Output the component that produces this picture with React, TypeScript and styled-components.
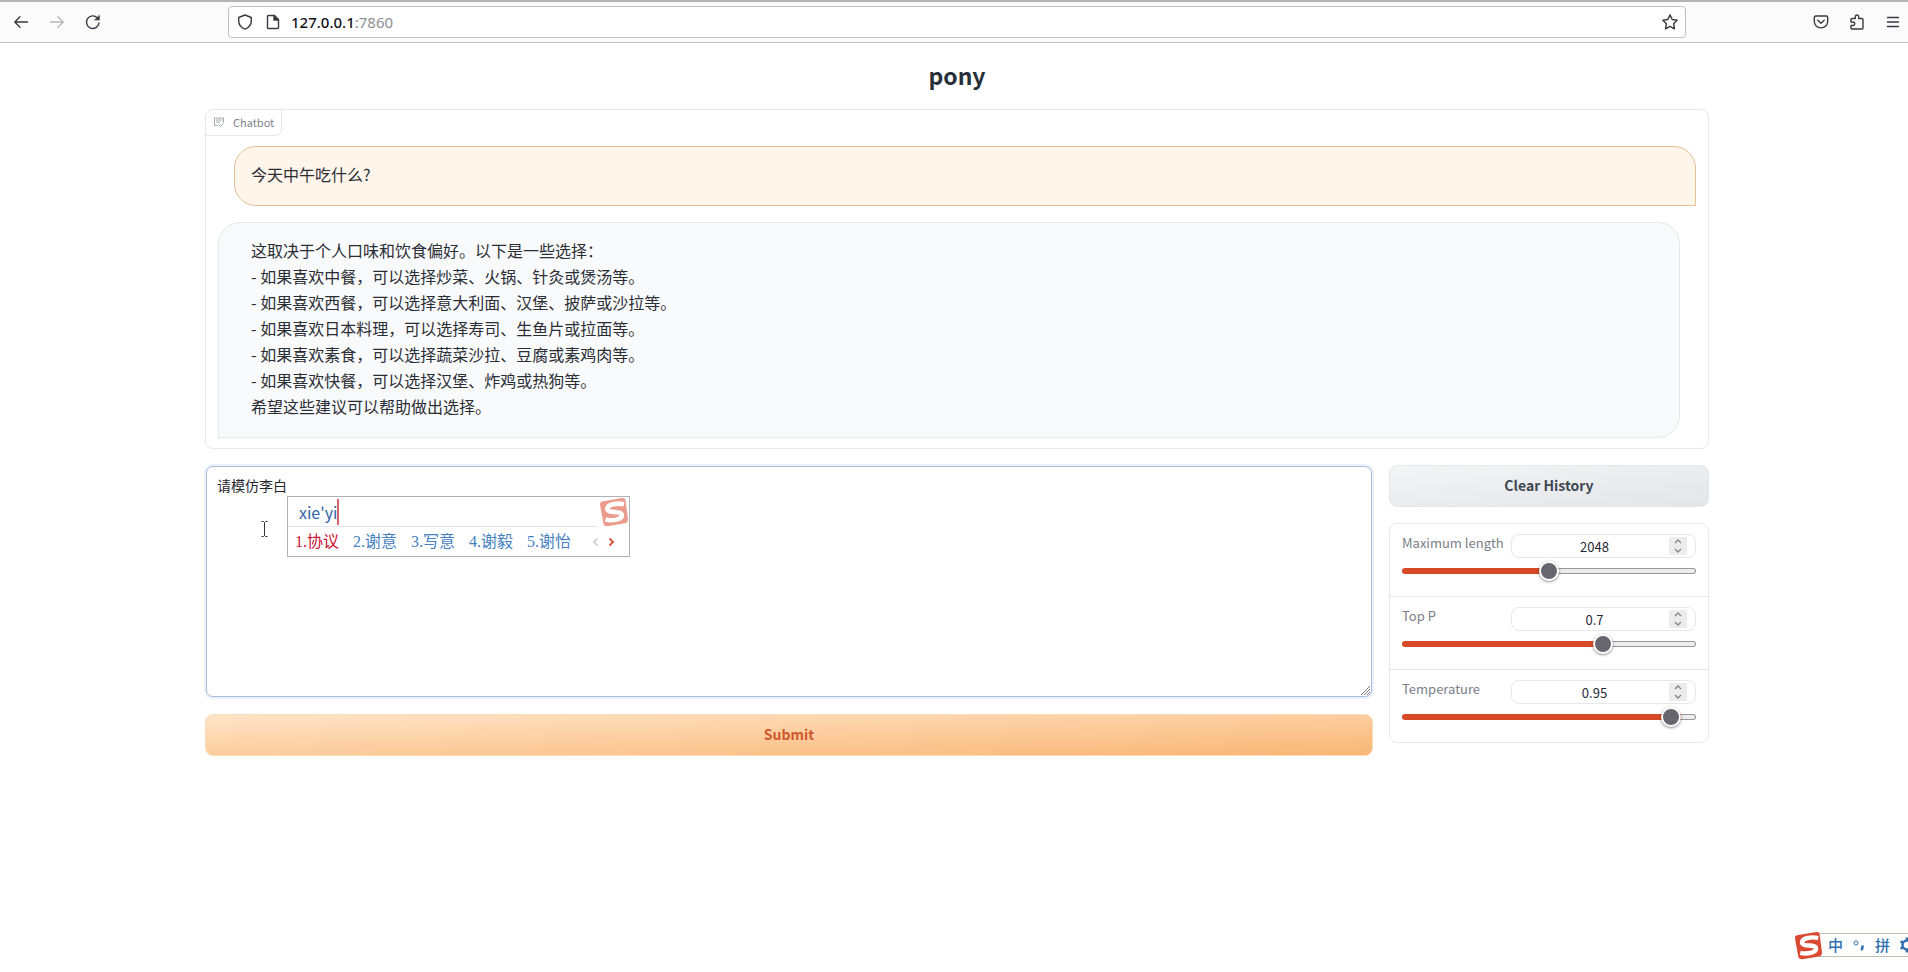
import React, { useState } from 'react';
import styled, { createGlobalStyle } from 'styled-components';

const sans = '"Noto Sans CJK SC", "Noto Sans", sans-serif';

const GlobalStyle = createGlobalStyle`
  *, *::before, *::after { box-sizing: border-box; }
  body { margin: 0; background: #fff; color: #272f3a; font-family: ${sans}; overflow-x: hidden; }
  button, input, textarea { font-family: inherit; }
`;

const Toolbar = styled.header`
  display: grid;
  grid-template-columns: 228px minmax(0, 1fr) 222px;
  align-items: center;
  height: 43px;
  background: #fbfbfb;
  border-top: 2px solid #b4b4b3;
  border-bottom: 1px solid #c3c3c5;
`;

const ToolGroup = styled.nav<{ $end?: boolean }>`
  display: flex;
  gap: 16px;
  padding: ${p => (p.$end ? '0 5px 0 0' : '0 0 0 11px')};
  justify-content: ${p => (p.$end ? 'flex-end' : 'flex-start')};
`;

const IconButton = styled.button<{ $faded?: boolean }>`
  display: grid;
  place-items: center;
  width: 20px;
  height: 20px;
  padding: 0;
  border: 0;
  background: none;
  color: ${p => (p.$faded ? '#b9b9bb' : '#3a3a40')};
`;

const AddressBar = styled.div`
  display: flex;
  align-items: center;
  gap: 8px;
  height: 32px;
  padding: 0 5px 0 6px;
  background: #fff;
  border: 1px solid #c0c0c2;
  border-radius: 4px;
  color: #1c1b22;
`;

const Address = styled.p`
  flex: 1;
  margin: 0;
  font: 15px/20px "Noto Sans", sans-serif;
  color: #8d8d92;
  b { font-weight: 500; color: #15141a; }
`;

const Page = styled.main`
  padding: 16px 16px 16px 22px;
`;

const Content = styled.div`
  display: flex;
  flex-direction: column;
  gap: 16px;
  max-width: 1504px;
  margin: 0 auto;
`;

const Title = styled.h1`
  margin: 0;
  padding-bottom: 2px;
  font-size: 23px;
  line-height: 32px;
  font-weight: 600;
  text-align: center;
`;

const ChatPanel = styled.section`
  border: 1px solid #e5e7eb;
  border-radius: 8px;
`;

const ChatLabel = styled.h2`
  display: inline-flex;
  align-items: center;
  gap: 8px;
  height: 26px;
  margin: 0;
  padding: 0 7px 2px;
  border: solid #e5e7eb;
  border-width: 0 1px 1px 0;
  border-radius: 7px 0 7px 0;
  font-size: 11px;
  font-weight: 400;
  color: #7d828b;
  vertical-align: top;
`;

const Messages = styled.div`
  display: flex;
  flex-direction: column;
  gap: 16px;
  padding: 10px 12px;
`;

const Bubble = styled.div<{ $user?: boolean }>`
  padding: 14px 16px 18px ${p => (p.$user ? 16 : 32)}px;
  margin: ${p => (p.$user ? '0 0 0 16px' : '0 16px 0 0')};
  border: 1px solid ${p => (p.$user ? '#dfbf93' : '#e5e7eb')};
  border-radius: ${p => (p.$user ? '22px 22px 0 22px' : '22px 22px 22px 0')};
  background: ${p => (p.$user ? '#fff5eb' : '#f9fafc')};
  color: #2b2d35;
  font-size: 16px;
  line-height: 26px;
  white-space: pre-line;
`;

const Columns = styled.div`
  display: grid;
  grid-template-columns: minmax(0, 1fr) 320px;
  gap: 16px;
  align-items: start;
`;

const Stack = styled.div`
  display: flex;
  flex-direction: column;
  gap: 16px;
`;

const Prompt = styled.div`
  position: relative;
  display: flex;
  height: 233px;
`;

const PromptInput = styled.textarea`
  flex: 1;
  margin: 1px;
  padding: 7px 10px;
  border: 1px solid #a9bddc;
  border-radius: 7px;
  outline: 0;
  box-shadow: 0 0 0 2px #e9f1fb;
  font-size: 14px;
  line-height: 22px;
  color: #25262c;
  resize: none;
`;

const Grip = styled.svg`
  position: absolute;
  right: 2px;
  bottom: 2px;
`;

const Pointer = styled.svg`
  position: absolute;
  left: 55px;
  top: 55px;
`;

const Ime = styled.div`
  position: absolute;
  left: 82px;
  top: 31px;
  width: 343px;
  height: 61px;
  background: #fff;
  border: 1px solid #b2b2b6;
`;

const Composition = styled.div`
  display: flex;
  align-items: center;
  height: 30px;
  margin-right: 32px;
  padding-left: 11px;
  border-bottom: 1px solid #e4e4e4;
  font-size: 16px;
  line-height: 26px;
  color: #3566a5;
  span { border-right: 2px solid #d4626b; }
`;

const Candidates = styled.ol`
  display: flex;
  align-items: center;
  height: 29px;
  margin: 0;
  padding: 0 0 0 7px;
  list-style: none;
  font: 16px/24px "Liberation Serif", "Noto Sans CJK SC", serif;
`;

const Candidate = styled.li<{ $first?: boolean }>`
  width: 58px;
  white-space: nowrap;
  color: ${p => (p.$first ? '#cb1236' : '#4580bf')};
`;

const CornerLogo = styled.div`
  position: absolute;
  top: 0;
  right: 0;
  display: flex;
  opacity: 0.55;
`;

const ActionButton = styled.button<{ $primary?: boolean }>`
  height: 42px;
  padding: 0 0 2px;
  border: 1px solid ${p => (p.$primary ? '#fbdcb8' : '#e5e7eb')};
  border-radius: 8px;
  background: ${p => (p.$primary
    ? 'linear-gradient(to bottom right, #ffe4c8, #f9b674)'
    : 'linear-gradient(to bottom right, #f3f4f6, #e3e5e8)')};
  color: ${p => (p.$primary ? '#d0582c' : '#404854')};
  font-size: 14px;
  font-weight: 600;
`;

const Settings = styled.section`
  border: 1px solid #e5e7eb;
  border-radius: 8px;
`;

const Setting = styled.div`
  padding: 10px 12px 15px;
  & + & { border-top: 1px solid #e5e7eb; }
`;

const SettingHead = styled.div`
  display: flex;
  justify-content: space-between;
  align-items: flex-start;
`;

const SettingLabel = styled.label`
  font-size: 13px;
  line-height: 18px;
  color: #7b8089;
`;

const NumberBox = styled.div`
  display: flex;
  align-items: center;
  width: 185px;
  height: 24px;
  padding-right: 8px;
  border: 1px solid #e5e7eb;
  border-radius: 8px;
`;

const NumberInput = styled.input`
  flex: 1;
  min-width: 0;
  height: 20px;
  padding: 0 0 0 8px;
  border: 0;
  outline: 0;
  background: none;
  font-size: 13px;
  color: #1f2937;
  text-align: center;
  appearance: textfield;
  &::-webkit-inner-spin-button { appearance: none; margin: 0; }
`;

const Spinner = styled.div`
  display: grid;
  width: 18px;
  height: 18px;
  background: #ececed;
`;

const Step = styled.button`
  display: grid;
  place-items: center;
  height: 9px;
  padding: 0;
  border: 0;
  background: none;
  color: #85858a;
`;

const Range = styled.input`
  display: block;
  width: 100%;
  height: 20px;
  margin: 3px 0 0;
  background: none;
  appearance: none;
  &::-webkit-slider-runnable-track {
    height: 6px;
    border: 1px solid transparent;
    border-radius: 3px;
    background:
      linear-gradient(#d64a27, #d64a27) 0 0 / var(--fill) 100% no-repeat border-box,
      linear-gradient(#ededef, #ededef) padding-box,
      linear-gradient(#97979c, #97979c) border-box;
  }
  &::-webkit-slider-thumb {
    appearance: none;
    width: 20px;
    height: 20px;
    margin-top: -8px;
    border: 2px solid #fff;
    border-radius: 50%;
    background: #67666e;
    box-shadow: 0 1px 3px rgba(0, 0, 0, 0.45);
  }
`;

const ImeStatus = styled.aside`
  position: fixed;
  right: 0;
  bottom: 12px;
  display: flex;
  align-items: center;
  overflow: hidden;
  height: 30px;
  width: 114px;
  > svg { flex: none; z-index: 1; }
`;

const StatusBar = styled.div`
  display: flex;
  align-items: center;
  gap: 9px;
  flex: 1;
  min-width: 0;
  height: 24px;
  margin-left: -4px;
  padding-left: 9px;
  border: solid #bfc0b5;
  border-width: 1px 0;
  background: #fff;
  color: #2f70b0;
  font-size: 15px;
  line-height: 20px;
  font-weight: 500;
  svg { flex: none; }
`;

const Icon = ({ children, size = 16 }: { children: React.ReactNode; size?: number }) => (
  <svg width={size} height={size} viewBox="0 0 16 16" fill="none" stroke="currentColor" strokeWidth="1.4" strokeLinecap="round" strokeLinejoin="round" aria-hidden="true">
    {children}
  </svg>
);

const ImeLogo = ({ size }: { size: number }) => (
  <svg width={size} height={size} viewBox="0 0 30 30" aria-hidden="true">
    <path d="M3 4.500 Q.8 5 1 7.500 L4.500 27 Q5.500 29.700 8.500 29.200 L26 26.300 Q29 25.500 29 22.500 L26.500 3 Q26 .5 23 1 Z" fill="#d94a30" />
    <path d="M25 7.300 C18 5.500 8.500 7.500 8.300 11.800 C8.200 16.800 22.500 13.300 22.800 18 C23 22.800 13 24 6.500 22.600" fill="none" stroke="#fff" strokeWidth="4.600" />
  </svg>
);

const reply = `这取决于个人口味和饮食偏好。以下是一些选择：
- 如果喜欢中餐，可以选择炒菜、火锅、针灸或煲汤等。
- 如果喜欢西餐，可以选择意大利面、汉堡、披萨或沙拉等。
- 如果喜欢日本料理，可以选择寿司、生鱼片或拉面等。
- 如果喜欢素食，可以选择蔬菜沙拉、豆腐或素鸡肉等。
- 如果喜欢快餐，可以选择汉堡、炸鸡或热狗等。
希望这些建议可以帮助做出选择。`;

type SliderProps = { id: string; label: string; max: number; step: number; initial: number };

function SliderSetting({ id, label, max, step, initial }: SliderProps) {
  const [value, setValue] = useState(initial);
  const change = (next: number) => setValue(Math.min(max, Math.max(0, Number(next.toFixed(2)))));
  const fill = { '--fill': `${(value / max) * 100}%` } as React.CSSProperties;
  return (
    <Setting>
      <SettingHead>
        <SettingLabel htmlFor={id}>{label}</SettingLabel>
        <NumberBox>
          <NumberInput id={id} type="number" max={max} step={step} value={value} onChange={e => change(Number(e.target.value))} />
          <Spinner>
            <Step aria-label={`Increase ${label}`} onClick={() => change(value + step)}>
              <svg width="8" height="5" viewBox="0 0 8 5" fill="none" stroke="currentColor" strokeWidth="1.3"><path d="M1 4 4 1 7 4" /></svg>
            </Step>
            <Step aria-label={`Decrease ${label}`} onClick={() => change(value - step)}>
              <svg width="8" height="5" viewBox="0 0 8 5" fill="none" stroke="currentColor" strokeWidth="1.3"><path d="M1 1 4 4 7 1" /></svg>
            </Step>
          </Spinner>
        </NumberBox>
      </SettingHead>
      <Range type="range" aria-label={label} min={0} max={max} step={step} value={value} style={fill} onChange={e => change(Number(e.target.value))} />
    </Setting>
  );
}

export default function App() {
  const [prompt, setPrompt] = useState('请模仿李白');
  return (
    <>
      <GlobalStyle />
      <Toolbar>
        <ToolGroup aria-label="Navigation">
          <IconButton aria-label="Back"><Icon><path d="M14.500 8H1.800M7 2.800 1.800 8 7 13.200" /></Icon></IconButton>
          <IconButton aria-label="Forward" $faded><Icon><path d="M1.500 8H14.200M9 2.800 14.200 8 9 13.200" /></Icon></IconButton>
          <IconButton aria-label="Reload"><Icon><path d="M14 9A6.300 6.300 0 1 1 12.300 3.800" /><path d="M14.400 1.500V6H9.800Z" fill="currentColor" strokeWidth="0.600" /></Icon></IconButton>
        </ToolGroup>
        <AddressBar>
          <IconButton aria-label="Site protection"><Icon><path d="M8 1 14.300 3.500V7C14.300 11 11.500 13.800 8 15.200 4.500 13.800 1.700 11 1.700 7V3.500Z" /></Icon></IconButton>
          <IconButton aria-label="Site information"><Icon><path d="M3.500 1.500H9.500L13.500 5.500V13.500Q13.500 14.500 12.500 14.500H3.500Q2.500 14.500 2.500 13.500V2.500Q2.500 1.500 3.500 1.500Z" /><path d="M9 1.500 13.500 6H9Z" fill="currentColor" /></Icon></IconButton>
          <Address><b>127.0.0.1</b>:7860</Address>
          <IconButton aria-label="Bookmark"><Icon><path d="M8 .9 10.200 5.500 15.200 6.200 11.600 9.700 12.500 14.800 8 12.400 3.500 14.800 4.400 9.700 .8 6.200 5.800 5.500Z" /></Icon></IconButton>
        </AddressBar>
        <ToolGroup $end aria-label="Browser tools">
          <IconButton aria-label="Save to Pocket"><Icon><path d="M2.800 2H13.200Q14.700 2 14.700 3.500V7.200C14.700 11 11.800 13.900 8 13.900S1.300 11 1.300 7.200V3.500Q1.300 2 2.800 2ZM4.800 6.300 8 9.300 11.200 6.300" /></Icon></IconButton>
          <IconButton aria-label="Extensions"><Icon><path d="M2 7V5.500Q2 4.500 3 4.500H6.300V2.800Q6.300 1 8 1T9.700 2.800V4.500H13Q14 4.500 14 5.500V14Q14 15 13 15H3Q2 15 2 14V11.500H4Q5.800 11.500 5.800 9.800T4 8H2Z" /></Icon></IconButton>
          <IconButton aria-label="Menu"><Icon><path d="M2.500 3.500H13.500M2.500 8H13.500M2.500 12.500H13.500" /></Icon></IconButton>
        </ToolGroup>
      </Toolbar>
      <Page>
        <Content>
          <Title>pony</Title>
          <ChatPanel>
            <ChatLabel>
              <svg width="12" height="12" viewBox="0 0 12 12" fill="none" stroke="#a3a6ad" aria-hidden="true"><path d="M4.500 9.500H1.500V2H10.500V6.500M3 4H9M3 6H7M5.500 8.500 7.500 10.500 10.500 7.500" /></svg>
              Chatbot
            </ChatLabel>
            <Messages>
              <Bubble $user>今天中午吃什么?</Bubble>
              <Bubble>{reply}</Bubble>
            </Messages>
          </ChatPanel>
          <Columns>
            <Stack>
              <Prompt>
                <PromptInput aria-label="Message" value={prompt} onChange={e => setPrompt(e.target.value)} />
                <Grip width="11" height="11" viewBox="0 0 11 11" stroke="#77777c" aria-hidden="true"><path d="M1 10 10 1M4 10 10 4M7 10 10 7" /></Grip>
                <Pointer width="9" height="18" viewBox="0 0 9 18" stroke="#333" fill="none" aria-hidden="true"><path d="M1.500 1.500H3.500L4.500 2.500 5.500 1.500H7.500M4.500 2.500V15.500M1.500 16.500H3.500L4.500 15.500 5.500 16.500H7.500" /></Pointer>
                <Ime>
                  <Composition><span>xie'yi</span></Composition>
                  <Candidates>
                    <Candidate $first>1.协议</Candidate>
                    <Candidate>2.谢意</Candidate>
                    <Candidate>3.写意</Candidate>
                    <Candidate>4.谢毅</Candidate>
                    <Candidate>5.谢怡</Candidate>
                    <li>
                      <svg width="32" height="10" viewBox="0 0 32 10" fill="none" aria-hidden="true">
                        <path d="M12.500 1.500 9 5 12.500 8.500" stroke="#c8c8ca" strokeWidth="1.500" />
                        <path d="M24.500 1.500 28 5 24.500 8.500" stroke="#d9573f" strokeWidth="2" />
                      </svg>
                    </li>
                  </Candidates>
                  <CornerLogo><ImeLogo size={30} /></CornerLogo>
                </Ime>
              </Prompt>
              <ActionButton $primary>Submit</ActionButton>
            </Stack>
            <Stack>
              <ActionButton>Clear History</ActionButton>
              <Settings>
                <SliderSetting id="max-length" label="Maximum length" max={4096} step={1} initial={2048} />
                <SliderSetting id="top-p" label="Top P" max={1} step={0.01} initial={0.7} />
                <SliderSetting id="temperature" label="Temperature" max={1} step={0.01} initial={0.95} />
              </Settings>
            </Stack>
          </Columns>
        </Content>
      </Page>
      <ImeStatus aria-label="Input method">
        <ImeLogo size={29} />
        <StatusBar>
          <span>中</span>
          <svg width="14" height="15" viewBox="0 0 14 15" fill="none" stroke="currentColor" aria-hidden="true"><circle cx="4" cy="5" r="2" /><path d="M10.500 7.500V9.500Q10.500 11 9 12" strokeWidth="2.500" /></svg>
          <span>拼</span>
          <svg width="16" height="16" viewBox="0 0 16 16" fill="none" stroke="currentColor" aria-hidden="true"><circle cx="8" cy="8" r="4.500" strokeWidth="2.500" /><path d="M8 .5V3M8 13V15.500M1.500 4.300 3.700 5.500M14.500 4.300 12.300 5.500M1.500 11.700 3.700 10.500M14.500 11.700 12.300 10.500" strokeWidth="2.500" /></svg>
        </StatusBar>
      </ImeStatus>
    </>
  );
}
